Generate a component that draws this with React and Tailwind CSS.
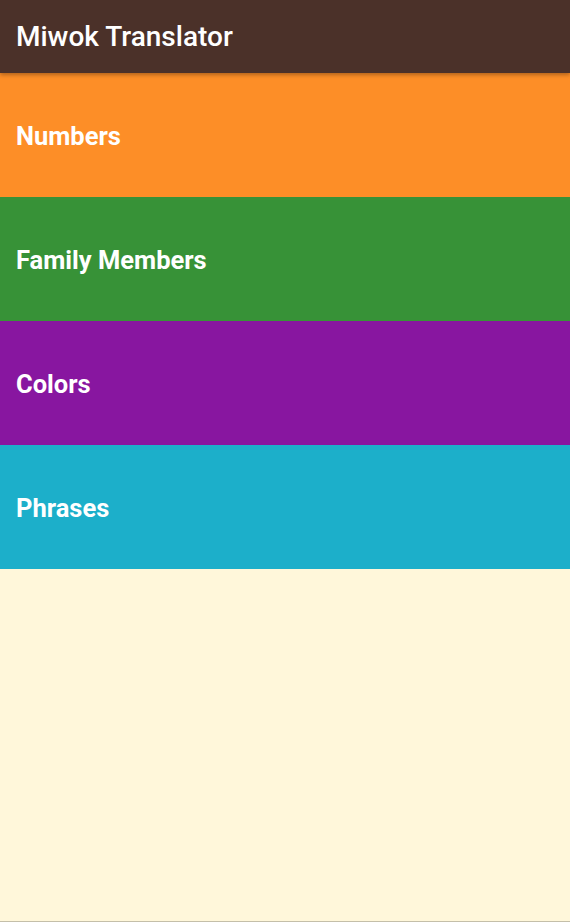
export default function App() {
  const categories = [
    { name: "Numbers", bg: "bg-[#fd8e27]" },
    { name: "Family Members", bg: "bg-[#379237]" },
    { name: "Colors", bg: "bg-[#8816a0]" },
    { name: "Phrases", bg: "bg-[#1cafca]" },
  ];

  return (
    <div className="flex h-[922px] w-[570px] flex-col bg-[#fff7da] font-['Roboto',sans-serif]">
      <header className="relative z-10 flex h-[73px] shrink-0 items-center bg-[#4b3129] px-4 shadow-[0_2px_4px_rgba(0,0,0,0.3)]">
        <h1 className="text-[28px] font-medium text-white">Miwok Translator</h1>
      </header>
      {categories.map((c) => (
        <div key={c.name} className={`flex h-[124px] items-center px-4 pt-[2px] ${c.bg}`}>
          <span className="text-[25.5px] font-bold text-white">{c.name}</span>
        </div>
      ))}
      <div className="flex-1" />
      <div className="h-px bg-[#c4bfa9]" />
    </div>
  );
}
